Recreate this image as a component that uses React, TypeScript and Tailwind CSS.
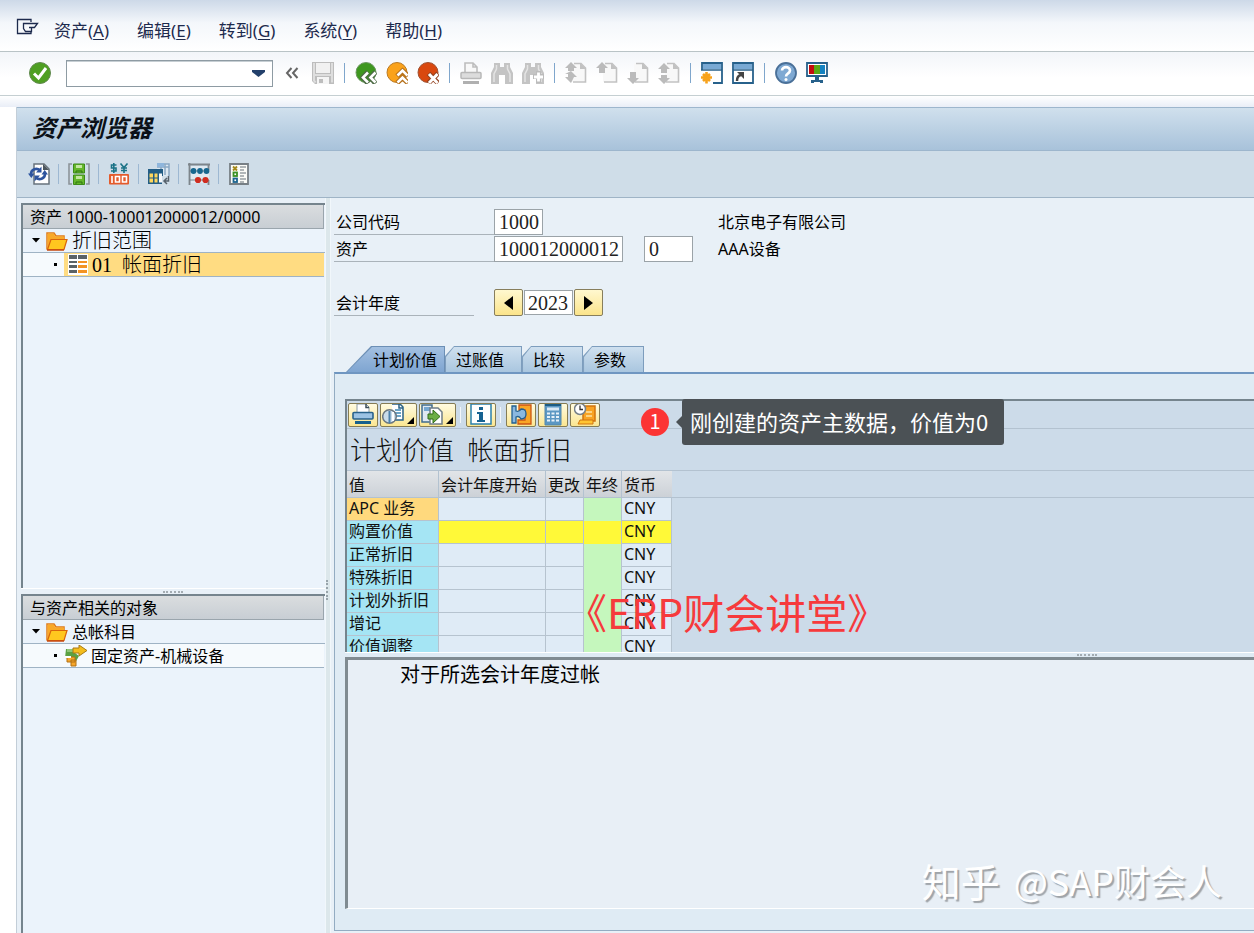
import React, { useState } from 'react';

const menus = [
  { label: '资产', key: 'A' },
  { label: '编辑', key: 'E' },
  { label: '转到', key: 'G' },
  { label: '系统', key: 'Y' },
  { label: '帮助', key: 'H' },
];

const rows = ['APC 业务', '购置价值', '正常折旧', '特殊折旧', '计划外折旧', '增记', '价值调整'];

const tabs = ['计划价值', '过账值', '比较', '参数'];

type IconProps = { children: React.ReactNode; size?: number };

function Icon({ children, size = 22 }: IconProps) {
  return (
    <svg width={size} height={size} viewBox="0 0 22 22" fill="none" aria-hidden="true" className="block shrink-0">
      {children}
    </svg>
  );
}

function IconButton({ label, children }: { label: string; children: React.ReactNode }) {
  return (
    <button type="button" aria-label={label} title={label} className="block shrink-0">
      <Icon>{children}</Icon>
    </button>
  );
}

function Separator() {
  return <span className="h-5 w-[2px] shrink-0 border-l border-[#9db8d2]" />;
}

function WideSeparator() {
  return <span className="ml-px h-5 w-[2px] shrink-0 border-l border-[#7fa6cc]" />;
}

// 灰色翻页图标共用的纸张轮廓
function Page() {
  return (
    <>
      <path d="M7 1.500h9l4.500 4.500v14H7z" fill="#f8f8f8" />
      <path d="M9 1.500h7l4.500 4.500v14H8" stroke="#c2c2c2" strokeWidth="1.600" />
      <path d="M15 1v6h6z" fill="#c2c2c2" />
    </>
  );
}

function Binoculars() {
  return (
    <>
      <path d="M3 1h6v4h4V1h6v4l3 6v11h-8v-9H8v9H0V11l3-6z" fill="#c4c4c4" />
      <path d="M5.500 3v4L3 12v8M16.500 3v4l2.500 5v8" stroke="#e4e4e4" strokeWidth="1.500" />
    </>
  );
}

function Folder() {
  return (
    <Icon>
      <path d="M1 19.500V3h7l2 3h8v4" fill="#fff3c8" stroke="#e07b1a" strokeWidth="1.500" />
      <path d="M1.500 19.500V3.500h6L9.500 6.500H18V11z" fill="#f9a928" />
      <path d="M1.500 19.500 5 9.500h16l-3 10z" fill="#ffc71f" stroke="#d9650b" strokeWidth="1.200" />
      <path d="M1 20h17" stroke="#c74a10" strokeWidth="1.500" />
    </Icon>
  );
}

function Caret() {
  return (
    <svg width="8" height="5" viewBox="0 0 8 5" aria-hidden="true" className="shrink-0">
      <path d="M0 0h8L4 4.500z" fill="#000" />
    </svg>
  );
}

function MenuBar() {
  return (
    <nav className="flex h-[52px] items-center border-b border-[#b9c3c6] bg-linear-to-b from-[#cdd9e8] via-[#f4f7fb] via-45% to-white pt-[10px] pl-4 text-[17px] text-[#1d2a4d]">
      <button type="button" aria-label="菜单" className="mb-2 mr-[15px]">
        <svg width="23" height="18" viewBox="0 0 23 18" fill="none" stroke="#1d2a4d" strokeWidth="1.300" aria-hidden="true" className="block">
          <path d="M15 4V1.500H1.500v14H15V14" />
          <path d="M7.500 5.500H21.500l-3 4h-3v4h-6l-2-3zM13 9.500h3" />
        </svg>
      </button>
      <div className="flex gap-7">
        {menus.map((m) => (
          <button key={m.key} type="button">
            {m.label}(<span className="underline underline-offset-2">{m.key}</span>)
          </button>
        ))}
      </div>
    </nav>
  );
}

function StandardToolbar() {
  return (
    <div className="flex h-11 items-center gap-[9px] border-b border-[#c5cfd2] bg-linear-to-b from-[#f2f5f9] to-white to-60% pb-px pl-[29px]">
      <IconButton label="确认">
        <circle cx="11" cy="11" r="10.500" fill="#4f9f22" stroke="#61894f" />
        <path d="m5 11.500 4.500 4.500L17 6" stroke="#fff" strokeWidth="3" />
      </IconButton>
      <div className="ml-[6px] flex h-[27px] w-[207px] shrink-0 border border-[#8e9ba3] bg-white shadow-[inset_0_1px_0_#c6ced3]">
        <input aria-label="命令" className="min-w-0 flex-1 bg-transparent px-1 outline-none" />
        <button type="button" aria-label="历史记录" className="flex w-7 items-center justify-center">
          <svg width="13" height="7" viewBox="0 0 13 7" aria-hidden="true">
            <path d="M0 0h13v2L6.500 7 0 2z" fill="#23406b" />
          </svg>
        </button>
      </div>
      <button type="button" aria-label="收起" className="mr-1 ml-[3px] shrink-0">
        <svg width="14" height="12" viewBox="0 0 14 12" fill="none" stroke="#666" strokeWidth="2" aria-hidden="true">
          <path d="M6.500 1 2 6l4.500 5M12.500 1 8 6l4.500 5" />
        </svg>
      </button>
      <IconButton label="保存">
        <path d="M0 0h22v22H3l-3-3z" fill="#bdbdbd" />
        <path d="M4 1h14v10H4z" fill="#f1f1f1" />
        <path d="M2 1v17.500L3.500 20.500M20 1v19.500" stroke="#dedede" strokeWidth="2" />
        <path d="M2 12h18v2H2z" fill="#dedede" />
        <path d="M5 15h12v7H5z" fill="#f5f5f5" />
        <path d="M7 17h4v4H7z" fill="#bdbdbd" />
      </IconButton>
      <WideSeparator />
      <IconButton label="返回">
        <circle cx="11" cy="10.500" r="10" fill="#3e971f" stroke="#6d9762" />
        <path d="M13 10 8 15.500l5 6M20.500 10 15.500 15.500l5 6" stroke="#4d6a45" strokeWidth="5" />
        <path d="M13 10.500 8 15.500l5 5M20.500 10.500l-5 5 5 5" stroke="#fff" strokeWidth="2.600" />
      </IconButton>
      <IconButton label="退出">
        <circle cx="11" cy="10.500" r="10" fill="#faa21b" stroke="#b97a24" />
        <path d="M11 14l5.500-5 5.500 5M11 21l5.500-5 5.500 5" stroke="#b5701a" strokeWidth="5" />
        <path d="M11.500 13.500l5-5 5 5M11.500 20.500l5-5 5 5" stroke="#fff" strokeWidth="2.600" />
      </IconButton>
      <IconButton label="取消">
        <circle cx="11" cy="10.500" r="10" fill="#d9480f" stroke="#9d5233" />
        <path d="m11.500 11.500 9.500 9.500M21 11.500 11.500 21" stroke="#94421f" strokeWidth="5" />
        <path d="m12 12 8.500 9M20.500 12 12 21" stroke="#fff" strokeWidth="3" />
      </IconButton>
      <WideSeparator />
      <IconButton label="打印">
        <path d="M5 10V1h8l4 4v5M13 1v4h4" fill="#f8f8f8" stroke="#bdbdbd" strokeWidth="1.600" />
        <rect x="1" y="10.500" width="20" height="6" rx="1" fill="#dcdcdc" stroke="#b8b8b8" strokeWidth="1.500" />
        <path d="M3 20.500h16" stroke="#b0b0b0" strokeWidth="3" />
      </IconButton>
      <IconButton label="查找">
        <Binoculars />
      </IconButton>
      <IconButton label="查找下一个">
        <Binoculars />
        <path d="M14 9h5v3h3v5h-3v4h-5v-4h-3v-5h3z" fill="#bcbcbc" />
        <path d="M16.500 10.500v9M12 15h9" stroke="#fff" strokeWidth="2.800" />
      </IconButton>
      <WideSeparator />
      <IconButton label="第一页">
        <Page />
        <path d="M6 0l6 6H9v3H3V6H0zM6 9l6 6H9v-1 1l-3 6-6-6h3v-3H0z" fill="#bbb" />
      </IconButton>
      <IconButton label="上一页">
        <Page />
        <path d="M6 0l6 6H9v5H3V6H0z" fill="#bbb" />
      </IconButton>
      <IconButton label="下一页">
        <Page />
        <path d="M6 22l6-6H9v-6H3v6H0z" fill="#bbb" />
      </IconButton>
      <IconButton label="最后一页">
        <Page />
        <path d="M6 22l6-6H9v-3H3v3H0zM6 1l6 6H9v4H3V7H0z" fill="#bbb" />
      </IconButton>
      <WideSeparator />
      <IconButton label="新建会话">
        <path d="M1 8V1h20v20h-9" fill="#fff" stroke="#27618b" strokeWidth="1.800" />
        <path d="M2 2h18v5H2z" fill="#79a9d3" />
        <path d="M0 8h21" stroke="#27618b" strokeWidth="1.500" />
        <path d="M5.500 10v11.500M0 15.500h11M2 12l7 7M9 12l-7 7" stroke="#f7a21b" strokeWidth="2.600" />
      </IconButton>
      <IconButton label="创建快捷方式">
        <path d="M1 1h20v20H1z" fill="#fff" stroke="#27618b" strokeWidth="1.800" />
        <path d="M2 2h18v5H2z" fill="#79a9d3" />
        <path d="M1 8h20" stroke="#27618b" strokeWidth="1.500" />
        <path d="M5 19c0-4 1-5.500 4-6" stroke="#444" strokeWidth="2.500" />
        <path d="M5 10h7v7z" fill="#444" />
      </IconButton>
      <WideSeparator />
      <IconButton label="帮助">
        <circle cx="11" cy="11" r="10" fill="#7fa9d3" stroke="#4a7098" strokeWidth="1.800" />
        <path d="M7 8.500C7 4 15 4 15 8.500c0 3-4 2.700-4 6" stroke="#fff" strokeWidth="2.600" />
        <circle cx="11" cy="17.500" r="1.500" fill="#fff" />
      </IconButton>
      <IconButton label="定制本地布局">
        <path d="M1 1h20v13H1z" fill="#fff" stroke="#27618b" strokeWidth="1.800" />
        <path d="M3 3h5v9H3z" fill="#c40d0d" />
        <path d="M8 3h6v9H8z" fill="#5ba813" />
        <path d="M14 3h5v9h-5z" fill="#1583c2" />
        <path d="M9 14h4v4h4v3h-3v-1H8v1H5v-3h4z" fill="#27618b" />
      </IconButton>
    </div>
  );
}

function AppToolbar() {
  return (
    <div className="flex h-[47px] items-center gap-2 border-b border-[#9fb4c6] bg-[#cfdde8] pb-px pl-[11px]">
      <IconButton label="刷新">
        <path d="M6 1h10l5 5v15H6z" fill="#fff" stroke="#68737c" strokeWidth="1.500" />
        <path d="M15 1v6h6z" fill="#4c565d" />
        <path d="M3 11c0-5 6-6.500 9-3.500M17 11c0 5-6 6.500-9 3.500" stroke="#2d549f" strokeWidth="2.600" />
        <path d="M0 10.500h6.500l-3.200 4.500zM20 11.500h-6.500L16.700 7zM13.500 3.500v6H8zM6.500 18.500v-6H12z" fill="#2d549f" />
      </IconButton>
      <Separator />
      <IconButton label="全部展开">
        <path d="M4 1H1v20h3M18 1h3v20h-3" stroke="#8c9499" strokeWidth="1.600" />
        <path d="M5.500 1h11v9h-11zM5.500 12h11v9.500h-11z" fill="#65b72b" stroke="#3d8b1a" />
        <path d="M8 2h6v3H8zM8 13h6v3H8z" fill="#c3e6a2" />
        <path d="M8 10V8h6v2M8 21v-2h6v2" stroke="#2f7613" />
      </IconButton>
      <Separator />
      <IconButton label="货币">
        <path d="M8.500 2H3.500v3H8v3H3M5.800 0v10M12.500.5l3.500 4 3.500-4M16 4v6M13 5h6M13 7.500h6" stroke="#1c7386" strokeWidth="1.600" />
        <rect x="1" y="11" width="20" height="10.500" rx="1" fill="#e45b2c" />
        <path d="M4 13v7M7.500 13.500h4v5.500h-4zM14.500 13.500h4v5.500h-4z" stroke="#fff" strokeWidth="1.600" />
      </IconButton>
      <Separator />
      <IconButton label="转换表格">
        <path d="M9 1h12v12H9z" fill="#dce8f2" />
        <path d="M9 1h12v12M9 4h12M13 1v6M17 1v11" stroke="#8aa8c4" strokeWidth="1.500" />
        <path d="M9 0h7v4H9z" fill="#8fb6dc" />
        <path d="M0 6h15v15H0z" fill="#225d85" />
        <path d="M1.500 10.500h3.500v4H1.500zM1.500 15.500h3.500v4H1.500zM6.500 10.500h3v4h-3zM6.500 15.500h3v4h-3z" fill="#ffd75c" />
        <path d="M11 10.500h3v9h-3z" fill="#f4f7fa" />
        <path d="M14 13h8v9h-8z" fill="#cfdde8" />
        <path d="M20.500 13v5H16M19 15l-3 3 3 3" stroke="#56616b" strokeWidth="1.500" />
      </IconButton>
      <Separator />
      <IconButton label="重新计算">
        <path d="M3 3h18v17H3z" fill="#dfe9f1" />
        <path d="M1.500 0v22M20.500 2v5M20.500 17v5M0 1.500h22" stroke="#7d858b" strokeWidth="1.800" />
        <path d="M1 8h20M1 17h20" stroke="#798188" />
        <circle cx="5.500" cy="8" r="2.900" fill="#17678f" />
        <circle cx="12" cy="8" r="2.900" fill="#17678f" />
        <circle cx="18.500" cy="8" r="2.900" fill="#17678f" />
        <circle cx="10" cy="17" r="3.100" fill="#cf2d20" />
        <circle cx="17.500" cy="17" r="3.100" fill="#cf2d20" />
      </IconButton>
      <Separator />
      <IconButton label="图例">
        <path d="M2 1h18v20H2z" fill="#fbfbf7" stroke="#777f85" strokeWidth="1.800" />
        <path d="M12 4h6M12 7h4M12 10h6M12 13h4M12 16h6M12 19h4" stroke="#69737a" strokeWidth="1.200" />
        <path d="m5 3.500 4 4M9 3.500l-4 4" stroke="#a58a1c" strokeWidth="1.800" />
        <rect x="5.500" y="9.500" width="3.500" height="3.500" stroke="#3a9022" strokeWidth="1.800" />
        <rect x="5.500" y="15.500" width="3.500" height="3.500" stroke="#1c648f" strokeWidth="1.800" />
      </IconButton>
    </div>
  );
}

function TreeHeader({ children }: { children: React.ReactNode }) {
  return (
    <h2 className="mr-px flex h-6 items-center border-r border-b border-[#9aa5ad] bg-linear-to-b from-[#dadddf] to-[#c8ced4] pl-[7px] text-base">
      {children}
    </h2>
  );
}

function Sidebar() {
  return (
    <aside className="flex w-[304px] shrink-0 flex-col pt-[5px] text-black">
      <section className="h-[385px] border-t-2 border-l-2 border-[#75848d] bg-[#ebf3fb]">
        <TreeHeader>资产 1000-100012000012/0000</TreeHeader>
        <ul className="font-['Liberation_Serif','Noto_Sans_CJK_SC',serif] text-xl font-light">
          <li className="flex h-6 items-center border-b border-[#9fb3c4] pl-[9px]">
            <Caret />
            <span className="mr-[4px] ml-[6px]"><Folder /></span>
            折旧范围
          </li>
          <li className="mr-px flex h-6 items-center border-b border-[#9fb3c4] bg-[#f6fafd] pl-[31px]">
            <span className="h-[3px] w-[3px] shrink-0 bg-black" />
            <button type="button" className="ml-[7px] flex h-full flex-1 items-center gap-1 bg-[#ffdc82] pl-1">
              <svg width="20" height="21" viewBox="0 0 20 21" aria-hidden="true" className="shrink-0 bg-white">
                <path d="M1 1h8v4H1zM10 1h9v4h-9zM1 7h8v2H1zM1 11h8v3H1zM1 16h8v3H1z" fill="#5b6266" />
                <path d="M10 7h9v2h-9zM10 11h9v3h-9zM10 16h9v3h-9z" fill="#f39323" />
              </svg>
              <span className="whitespace-pre">01  帐面折旧</span>
            </button>
          </li>
        </ul>
      </section>

      <div className="flex h-[6px] shrink-0 items-center justify-center border-t border-white">
        <span className="w-5 border-t-2 border-dotted border-[#a3acb2]" />
      </div>

      <section className="flex-1 border-t-2 border-l-2 border-[#75848d] bg-[#ebf3fb]">
        <TreeHeader>与资产相关的对象</TreeHeader>
        <ul className="text-base">
          <li className="flex h-6 items-center border-b border-[#9fb3c4] pl-[9px]">
            <Caret />
            <span className="mr-[4px] ml-[6px]"><Folder /></span>
            总帐科目
          </li>
          <li className="mr-px flex h-6 items-center border-b border-[#9fb3c4] bg-[#f6fafd] pl-[31px]">
            <span className="h-[3px] w-[3px] shrink-0 bg-black" />
            <button type="button" className="ml-2 flex items-center gap-1">
              <Icon>
                <path d="M1 4h9v4l4 3-4 7-2-4-8-1z" fill="#5ba143" />
                <path d="M2 4h6v3H2z" fill="#8fc579" />
                <path d="M8 3h6V0l8 5.500-8 5.500V8H8z" fill="#f4bd1c" stroke="#a87a16" />
                <path d="M2 12h8v5H2zM6 15h5v6H6z" fill="#f6a62a" stroke="#b27113" />
                <path d="M0 11h6v2H0z" fill="#fff" />
              </Icon>
              固定资产-机械设备
            </button>
          </li>
        </ul>
      </section>
    </aside>
  );
}

type FieldProps = { label: string; id: string; value: string; wide?: boolean };

function Field({ label, id, value, wide }: FieldProps) {
  return (
    <>
      <label htmlFor={id} className="flex h-full w-40 shrink-0 items-center border-b border-[#aab3ba] pl-[2px]">
        {label}
      </label>
      <input
        id={id}
        defaultValue={value}
        className={
          (wide ? 'w-[129px]' : 'w-[49px]') +
          " h-[26px] shrink-0 border border-[#9ba3a8] bg-white pl-1 font-['Liberation_Serif',serif] text-xl text-[#222] outline-none"
        }
      />
    </>
  );
}

function YearButton({ label, path }: { label: string; path: string }) {
  return (
    <button
      type="button"
      aria-label={label}
      className="flex h-[27px] w-[29px] items-center justify-center rounded-[2px] border border-[#877e5c] bg-linear-to-b from-[#fff8cf] to-[#fbe48a]"
    >
      <svg width="9" height="14" viewBox="0 0 9 14" aria-hidden="true">
        <path d={path} fill="#000" />
      </svg>
    </button>
  );
}

function HeaderForm() {
  return (
    <form className="flex flex-col gap-px pt-[11px] text-base text-black">
      <div className="flex h-[26px] items-center">
        <Field label="公司代码" id="company" value="1000" />
        <span className="ml-[175px] whitespace-nowrap">北京电子有限公司</span>
      </div>
      <div className="flex h-[26px] items-center">
        <Field label="资产" id="asset" value="100012000012" wide />
        <input
          aria-label="资产次级编号"
          defaultValue="0"
          className="ml-[21px] h-[26px] w-[49px] shrink-0 border border-[#9ba3a8] bg-white pl-1 font-['Liberation_Serif',serif] text-xl text-[#222] outline-none"
        />
        <span className="ml-[25px] whitespace-nowrap">AAA设备</span>
      </div>
      <div className="mt-[26px] flex h-[27px] items-center gap-px">
        <label htmlFor="year" className="mr-[19px] flex h-[26px] w-[140px] shrink-0 items-center border-b border-[#aab3ba] pt-px pl-[2px]">
          会计年度
        </label>
        <YearButton label="上一年" path="M9 0v14L0 7z" />
        <input
          id="year"
          defaultValue="2023"
          className="h-[25px] w-[49px] border border-[#9ba3a8] bg-white pl-[3px] font-['Liberation_Serif',serif] text-xl text-[#222] outline-none"
        />
        <YearButton label="下一年" path="M0 0v14l9-7z" />
      </div>
    </form>
  );
}

function TabStrip() {
  const [active, setActive] = useState('计划价值');
  return (
    <div role="tablist" className="mt-[30px] flex h-[26px] pl-3 text-base text-black">
      {tabs.map((t, i) => (
        <button
          key={t}
          type="button"
          role="tab"
          aria-selected={t === active}
          onClick={() => setActive(t)}
          className={
            i === 0
              ? 'h-full bg-[#6c8fb5] pt-px pr-px [clip-path:polygon(25px_0,100%_0,100%_100%,0_100%)]'
              : 'h-full bg-[#7d9dbd] pt-px pr-px pl-px [clip-path:polygon(9px_0,100%_0,100%_100%,0_100%,0_10px)]'
          }
        >
          <span
            className={
              (i === 0
                ? 'pr-[7px] pl-[27px] [clip-path:polygon(26px_0,100%_0,100%_100%,1px_100%)]'
                : 'pr-[17px] pl-[10px] [clip-path:polygon(8px_0,100%_0,100%_100%,0_100%,0_10px)]') +
              (t === active
                ? ' bg-linear-to-b from-[#a3c0e1] to-[#7fa5d1]'
                : ' bg-linear-to-b from-[#cfe0ef] to-[#a9c6df]') +
              ' flex h-full items-center'
            }
          >
            {t}
          </span>
        </button>
      ))}
    </div>
  );
}

function GridButton({ label, menu, children }: { label: string; menu?: boolean; children: React.ReactNode }) {
  return (
    <button
      type="button"
      aria-label={label}
      title={label}
      className={
        (menu ? 'w-[37px] justify-between' : 'w-[30px] justify-center') +
        ' flex h-6 items-center rounded-[2px] border border-[#857c55] bg-linear-to-b from-[#fffbe0] to-[#fbe690] px-px'
      }
    >
      <Icon>{children}</Icon>
      {menu && (
        <svg width="8" height="8" viewBox="0 0 8 8" aria-hidden="true" className="mt-3 shrink-0">
          <path d="M7 0v7H0z" fill="#000" />
        </svg>
      )}
    </button>
  );
}

function GridToolbar() {
  return (
    <div className="flex h-7 items-center gap-[2px] border-b border-[#b3c2d0] pl-px">
      <GridButton label="打印">
        <path d="M5 9V0h9l3 3v6" fill="#fff" stroke="#8a9aa6" />
        <path d="M14 0v3.500h3" stroke="#3b4c58" strokeWidth="1.500" />
        <rect x="1" y="8.500" width="20" height="6.500" rx="1" fill="#9cc3e4" stroke="#28628b" strokeWidth="1.600" />
        <path d="M3 18.500h16" stroke="#17618d" strokeWidth="3" />
      </GridButton>
      <GridButton label="视图" menu>
        <path d="M10 0h8l3 3v13H10" fill="#fff" stroke="#2a6286" strokeWidth="1.500" />
        <path d="M17 0v4h4" stroke="#2a6286" strokeWidth="1.500" />
        <path d="M13 6h6M13 9h6M13 12h6" stroke="#3c87b5" strokeWidth="1.500" />
        <circle cx="7.500" cy="12.500" r="6.800" fill="#c9dcea" stroke="#6b7780" strokeWidth="1.500" />
        <path d="M7.500 7v12" stroke="#4c81aa" strokeWidth="2" />
        <path d="M11 8v9" stroke="#fff" strokeWidth="2" />
      </GridButton>
      <GridButton label="导出" menu>
        <path d="M1 1h10v17H1z" fill="#dfe9f2" stroke="#406c8d" strokeWidth="1.500" />
        <path d="M3 3h6v4H3z" fill="#76a8d1" />
        <path d="M9 4h8l4 4v12H9z" fill="#fff" stroke="#6f7d87" strokeWidth="1.500" />
        <path d="M7 10h5V6l7 6.500-7 6.500v-4H7z" fill="#6cae45" stroke="#2f6d17" />
      </GridButton>
      <span className="mr-[3px] ml-[2px] h-4 w-px bg-[#f2f6fa]" />
      <GridButton label="信息">
        <path d="M1 0h20v20H1z" fill="#fff" stroke="#2a80ac" strokeWidth="1.500" />
        <path d="M9 3h4v3H9zM7 8h6v8h2v2H7v-2h2v-6H7z" fill="#166291" />
      </GridButton>
      <span className="mr-[3px] ml-[2px] h-4 w-px bg-[#f2f6fa]" />
      <GridButton label="关系">
        <path d="M9 1h12v19H8v-4h7V6H9z" fill="#f9a625" stroke="#cc5615" strokeWidth="1.300" />
        <path d="M2 2h4v5c3 1 4 0 5-2 5 0 5 3 5 5s-1 5-5 5c-1-2-3-3-5-2v6H2z" fill="#8ab8df" stroke="#215f91" strokeWidth="1.300" />
      </GridButton>
      <GridButton label="计算">
        <path d="M3 0h16v21H3z" fill="#5b97c3" stroke="#5387ab" />
        <path d="M3 0h16v2H3z" fill="#1c5d85" />
        <path d="M5 3.500h12v3H5z" fill="#d9e9f5" />
        <path d="M5 9.500h3M9.500 9.500h3M14 9.500h3M5 13h3M9.500 13h3M14 13h3M5 16.500h3M9.500 16.500h3M14 16.500h3" stroke="#e7f1f9" strokeWidth="2.200" />
      </GridButton>
      <GridButton label="历史">
        <path d="M9 2h12v15H9z" fill="#f8a323" stroke="#d2740e" strokeWidth="1.500" />
        <path d="M6 16h13v4H4z" fill="#ffc533" stroke="#d2740e" />
        <path d="M12 8h6M12 12h6" stroke="#fde3a3" strokeWidth="1.500" />
        <circle cx="6" cy="5" r="5.500" fill="#fff" stroke="#77828a" strokeWidth="1.500" />
        <path d="M6 1.500v4h3" stroke="#333" strokeWidth="1.300" />
      </GridButton>
    </div>
  );
}

function ValuesGrid() {
  return (
    <section className="h-[253px] overflow-hidden border-t-2 border-l-2 border-[#75848d] bg-[#ccdbe9]">
      <GridToolbar />
      <h1 className="flex h-[42px] items-center border-b border-[#b3c2d0] pt-[2px] pl-[3px] text-[26px] font-light whitespace-pre">
        {'计划价值  帐面折旧'}
      </h1>
      <table className="w-full table-fixed border-separate border-spacing-0 text-base leading-none">
        <colgroup>
          <col className="w-[92px]" />
          <col className="w-[107px]" />
          <col className="w-[38px]" />
          <col className="w-[38px]" />
          <col className="w-[50px]" />
          <col />
        </colgroup>
        <thead>
          <tr className="h-[27px] text-left whitespace-nowrap *:border-b *:border-[#b3c2d0] *:p-0 *:pt-[2px] *:pl-[2px] *:font-normal">
            <th className="border-r bg-linear-to-b from-[#e2e5e8] to-[#ccd1d7]">值</th>
            <th className="border-r bg-linear-to-b from-[#e2e5e8] to-[#ccd1d7]">会计年度开始</th>
            <th className="border-r bg-linear-to-b from-[#e2e5e8] to-[#ccd1d7]">更改</th>
            <th className="border-r bg-linear-to-b from-[#e2e5e8] to-[#ccd1d7]">年终</th>
            <th className="bg-linear-to-b from-[#e2e5e8] to-[#ccd1d7]">货币</th>
            <th aria-hidden="true"></th>
          </tr>
        </thead>
        <tbody>
          {rows.map((name, i) => {
            const cell = i === 1 ? 'bg-[#fff938]' : 'bg-[#dfebf6]';
            return (
              <tr key={name} className="h-[23px] whitespace-nowrap *:border-[#b6c3cf] *:p-0 *:pb-[2px] *:pl-[2px]">
                <td className={(i === 0 ? 'bg-[#ffd97d]' : 'bg-[#a5e5f4]') + ' border-r border-b'}>{name}</td>
                <td className={cell + ' border-r border-b'}></td>
                <td className={cell + ' border-r border-b'}></td>
                <td className={(i === 1 ? 'bg-[#fff938]' : 'bg-[#c5f7bd]') + ' border-r'}></td>
                <td className={cell + ' border-r border-b'}>CNY</td>
                <td></td>
              </tr>
            );
          })}
        </tbody>
      </table>
    </section>
  );
}

// 演示用的标注层，盖在表格上方
function Annotations() {
  return (
    <div className="pointer-events-none font-['Noto_Sans_CJK_SC',sans-serif]">
      <span className="absolute top-[9px] left-[296px] flex h-7 w-7 items-center justify-center rounded-full bg-[#fc3434] pb-[2px] text-xl text-white">
        1
      </span>
      <div className="absolute top-0 left-[337px] flex h-[46px] items-center rounded-[3px] bg-[#4b5155] pr-4 pb-[2px] pl-2 text-[22px] whitespace-nowrap text-white">
        <span className="absolute top-[17px] -left-[6px] border-y-6 border-r-6 border-y-transparent border-r-[#4b5155]" />
        刚创建的资产主数据，价值为0
      </div>
      <div className="absolute top-[182px] left-[221px] text-[41px] leading-[60px] whitespace-nowrap text-[#f63a3c]">
        《ERP财会讲堂》
      </div>
    </div>
  );
}

export default function App() {
  return (
    <div className="relative flex h-screen flex-col overflow-hidden bg-white font-['Noto_Sans','Noto_Sans_CJK_SC',sans-serif] text-[#111]">
      <MenuBar />
      <StandardToolbar />
      <div className="h-[11px] shrink-0 bg-linear-to-b from-white to-[#e9eef7]" />

      <main className="ml-4 flex min-h-0 flex-1 flex-col border-l border-[#c3ced8] bg-[#e8f0f7]">
        <header className="flex h-11 shrink-0 items-center border-y border-[#9db6cd] bg-linear-to-b from-[#d0e0ed] to-[#a8c2da] pb-[2px] pl-[15px]">
          <span className="text-2xl font-bold text-[#0b1118] italic">资产浏览器</span>
        </header>
        <AppToolbar />

        <div className="flex min-h-0 flex-1 pl-1">
          <Sidebar />
          <div className="w-[6px] shrink-0 border-x border-[#f1f7fb] bg-[#dce7eb]">
            <div className="mt-[382px] h-5 border-l-2 border-dotted border-[#98a4ab]" />
          </div>

          <div className="flex min-w-0 flex-1 flex-col pb-[2px] pl-[3px]">
            <HeaderForm />
            <TabStrip />
            <div className="flex min-h-0 flex-1 flex-col border-t-2 border-b border-l border-t-[#6f96c1] border-b-[#93acc2] border-l-[#93acc2] bg-[#dfebf4] pt-[25px] pb-[21px] pl-[10px]">
              <div className="relative shrink-0">
                <ValuesGrid />
                <Annotations />
              </div>
              <div className="flex h-[5px] shrink-0 items-center border-t border-white pl-[732px]">
                <span className="w-5 border-t-2 border-dotted border-[#a3acb2]" />
              </div>
              <section className="min-h-0 flex-1 border-t-3 border-b border-l-3 border-[#808b91] border-b-white bg-[#e8eff6] pl-[52px] text-xl text-black">
                <p className="leading-[30px]">对于所选会计年度过帐</p>
              </section>
            </div>
          </div>
        </div>
      </main>

      <div className="pointer-events-none absolute right-8 bottom-[25px] flex items-center gap-[14px] font-['Noto_Sans_CJK_SC',sans-serif] leading-[56px] whitespace-nowrap text-white [text-shadow:2px_2px_1px_#9fa4a9]">
        <span className="text-[39px]">知乎</span>
        <span className="text-[36px]">@SAP财会人</span>
      </div>
    </div>
  );
}
